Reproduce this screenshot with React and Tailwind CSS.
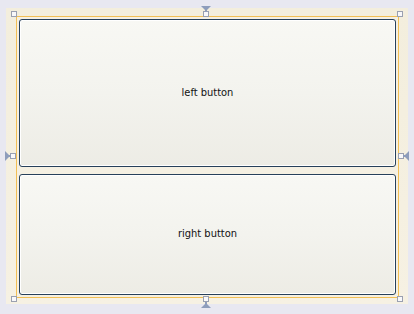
import React from "react";

function Handle({ className }) {
  return (
    <div
      className={
        "absolute w-[6px] h-[6px] border border-[#9aa0b0] bg-[#f8f8fa] " + className
      }
    />
  );
}

function Btn({ label, h }) {
  return (
    <button
      className={
        "w-full rounded-[3px] border border-[#27405a] bg-gradient-to-b from-[#f8f8f4] via-[#f3f3ee] to-[#edece5] shadow-[inset_0_0_0_1px_#ffffff] flex items-center justify-center text-[11px] text-[#111]  " +
        h
      }
      style={{ fontFamily: '"DejaVu Sans Condensed", "Liberation Sans", Arial, sans-serif' }}
    >
      {label}
    </button>
  );
}

export default function App() {
  return (
    <div className="relative w-[414px] h-[314px] bg-[#e8e8f1] pt-[8px] pl-[6px] overflow-hidden">
      <div className="w-[402px] h-[296px] bg-gradient-to-b from-[#f3eedd] to-[#f6f1e3] pt-[8px] pl-[10px]">
        <div className="w-[383px] h-[282px] border border-[#f2bf55] p-[2px] flex flex-col gap-[7px] bg-[#f5f0e2]">
          <Btn label="left button" h="h-[148px]" />
          <Btn label="right button" h="h-[121px]" />
        </div>
      </div>
      {/* resize handles (overlay) */}
      <Handle className="left-[11px] top-[11px]" />
      <Handle className="left-[203px] top-[11px]" />
      <Handle className="left-[397px] top-[11px]" />
      <Handle className="left-[10px] top-[153px]" />
      <Handle className="left-[398px] top-[153px]" />
      <Handle className="left-[11px] top-[296px]" />
      <Handle className="left-[203px] top-[296px]" />
      <Handle className="left-[397px] top-[296px]" />
      <svg className="absolute left-[201px] top-[6px]" width="10" height="6" viewBox="0 0 10 6">
        <path d="M0 0H10L6 4V6H4V4Z" fill="#8e9dbb" />
      </svg>
      <svg className="absolute left-[201px] top-[302px]" width="10" height="6" viewBox="0 0 10 6">
        <path d="M4 0H6V2L10 6H0L4 2Z" fill="#8e9dbb" />
      </svg>
      <svg className="absolute left-[5px] top-[151px]" width="6" height="10" viewBox="0 0 6 10">
        <path d="M0 0L4 4H6V6H4L0 10Z" fill="#8e9dbb" />
      </svg>
      <svg className="absolute left-[403px] top-[151px]" width="6" height="10" viewBox="0 0 6 10">
        <path d="M6 0L2 4H0V6H2L6 10Z" fill="#8e9dbb" />
      </svg>
    </div>
  );
}
